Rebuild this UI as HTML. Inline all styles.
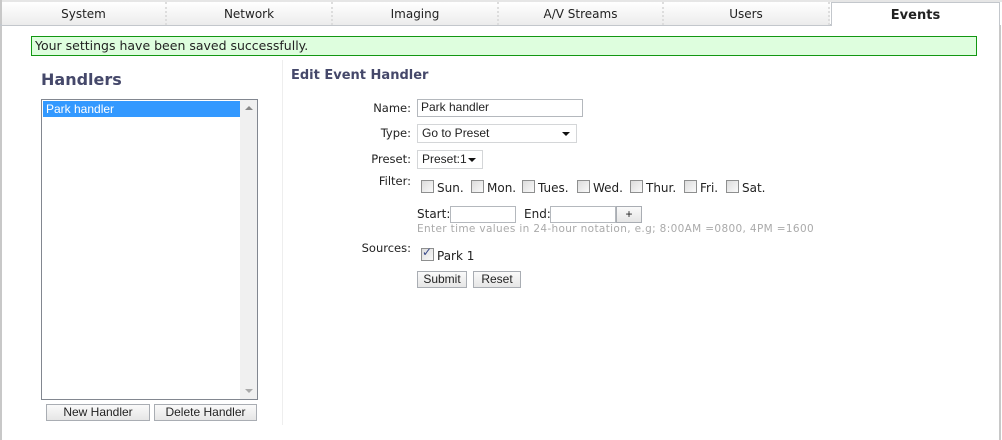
<!DOCTYPE html>
<html><head><style>
*{box-sizing:border-box;margin:0;padding:0}
body{width:1002px;height:440px;background:#fff;position:relative;overflow:hidden;font-family:"DejaVu Sans",Verdana,sans-serif;font-size:11px;color:#222}
.a{position:absolute}
.tab{position:absolute;top:2px;height:23px;background:linear-gradient(#fff,#ececec);text-align:center;line-height:25px;font-size:12px;color:#222;border-right:2px dotted #ddd}
.lbl{position:absolute;text-align:right;width:80px;font-size:11.5px}
.inp{position:absolute;border:1px solid #b4b8bd;background:#fff;font-family:"Liberation Sans",Arial,sans-serif;font-size:12px;padding-left:3px;line-height:15px}
.sel{position:absolute;border:1px solid #d4d6d8;background:#fff;font-family:"Liberation Sans",Arial,sans-serif;font-size:12px;padding-left:4px;line-height:16px}
.arr{position:absolute;right:6px;top:7px;width:0;height:0;border-left:4px solid transparent;border-right:4px solid transparent;border-top:4px solid #111}
.cb{position:absolute;width:13px;height:13px;border:1px solid #8e8f8f;background:linear-gradient(135deg,#dcdcdc,#fafafa)}
.cl{position:absolute;font-size:12px}
.btn{position:absolute;border:1px solid #a9adb3;background:linear-gradient(#fafafa,#e6e6e6);font-family:"Liberation Sans",Arial,sans-serif;font-size:12px;text-align:center;line-height:15px}
</style></head><body>
<div class="a" style="left:0;top:0;width:1002px;height:2px;background:#e6e6e6"></div>
<div class="a" style="left:0;top:0;width:2px;height:440px;background:#c8c8c8"></div>
<div class="a" style="left:999px;top:25px;width:2px;height:415px;background:#c8c8c8"></div>
<div class="a" style="left:0;top:24px;width:832px;height:2px;background:#c3c7cc"></div>
<div class="tab" style="left:2px;width:165px">System</div>
<div class="tab" style="left:167px;width:166px">Network</div>
<div class="tab" style="left:333px;width:166px">Imaging</div>
<div class="tab" style="left:499px;width:165px">A/V Streams</div>
<div class="tab" style="left:664px;width:166px">Users</div>
<div class="a" style="left:831px;top:2px;width:169px;height:24px;border:1px solid #c3c7cc;border-bottom:none;background:#fff;text-align:center;line-height:26px;font-weight:bold;font-size:13px">Events</div>
<div class="a" style="left:31px;top:36px;width:946px;height:20px;border:1px solid #129712;background:#defede;font-size:12.5px;line-height:18px;padding-left:3px">Your settings have been saved successfully.</div>
<div class="a" style="left:41px;top:70px;font-size:16px;font-weight:bold;color:#45486a">Handlers</div>
<div class="a" style="left:41px;top:99px;width:217px;height:301px;border:1px solid #828790;background:#fff">
 <div class="a" style="left:1px;top:1px;width:197px;height:16px;background:#3399ff;color:#fff;font-family:'Liberation Sans',Arial,sans-serif;font-size:12px;line-height:16px;padding-left:3px">Park handler</div>
 <div class="a" style="left:198px;top:0;width:17px;height:299px;background:#f0f0f0"></div>
 <div class="a" style="left:203px;top:6px;border-left:4px solid transparent;border-right:4px solid transparent;border-bottom:4px solid #888"></div>
 <div class="a" style="left:203px;top:289px;border-left:4px solid transparent;border-right:4px solid transparent;border-top:4px solid #aaa"></div>
</div>
<div class="btn" style="left:46px;top:404px;width:104px;height:17px">New Handler</div>
<div class="btn" style="left:154px;top:404px;width:103px;height:17px">Delete Handler</div>
<div class="a" style="left:282px;top:60px;width:1px;height:365px;background:#eee"></div>
<div class="a" style="left:291px;top:68px;font-size:13px;font-weight:bold;color:#45486a">Edit Event Handler</div>
<div class="lbl" style="left:331px;top:101px">Name:</div>
<div class="inp" style="left:417px;top:99px;width:166px;height:18px">Park handler</div>
<div class="lbl" style="left:331px;top:126px">Type:</div>
<div class="sel" style="left:417px;top:124px;width:160px;height:19px">Go to Preset<div class="arr"></div></div>
<div class="lbl" style="left:331px;top:152px">Preset:</div>
<div class="sel" style="left:417px;top:150px;width:66px;height:19px">Preset:1<div class="arr"></div></div>
<div class="lbl" style="left:331px;top:174px">Filter:</div>
<div class="cb" style="left:421px;top:180px"></div><div class="cl" style="left:437px;top:181px">Sun.</div>
<div class="cb" style="left:471px;top:180px"></div><div class="cl" style="left:487px;top:181px">Mon.</div>
<div class="cb" style="left:522px;top:180px"></div><div class="cl" style="left:538px;top:181px">Tues.</div>
<div class="cb" style="left:577px;top:180px"></div><div class="cl" style="left:593px;top:181px">Wed.</div>
<div class="cb" style="left:630px;top:180px"></div><div class="cl" style="left:646px;top:181px">Thur.</div>
<div class="cb" style="left:684px;top:180px"></div><div class="cl" style="left:700px;top:181px">Fri.</div>
<div class="cb" style="left:726px;top:180px"></div><div class="cl" style="left:742px;top:181px">Sat.</div>
<div class="cl" style="left:417px;top:207px">Start:</div>
<div class="inp" style="left:450px;top:206px;width:66px;height:17px"></div>
<div class="cl" style="left:524px;top:207px">End:</div>
<div class="inp" style="left:550px;top:206px;width:66px;height:17px"></div>
<div class="btn" style="left:616px;top:206px;width:26px;height:17px">+</div>
<div class="a" style="left:417px;top:223px;font-size:10.5px;letter-spacing:0.35px;color:#aaa">Enter time values in 24-hour notation, e.g; 8:00AM =0800, 4PM =1600</div>
<div class="lbl" style="left:331px;top:241px">Sources:</div>
<div class="cb" style="left:421px;top:248px"></div>
<div class="a" style="left:422px;top:245px;font-size:12px;color:#3a4a8a">✓</div>
<div class="cl" style="left:437px;top:249px">Park 1</div>
<div class="btn" style="left:417px;top:271px;width:50px;height:17px">Submit</div>
<div class="btn" style="left:473px;top:271px;width:48px;height:17px">Reset</div>
</body></html>
